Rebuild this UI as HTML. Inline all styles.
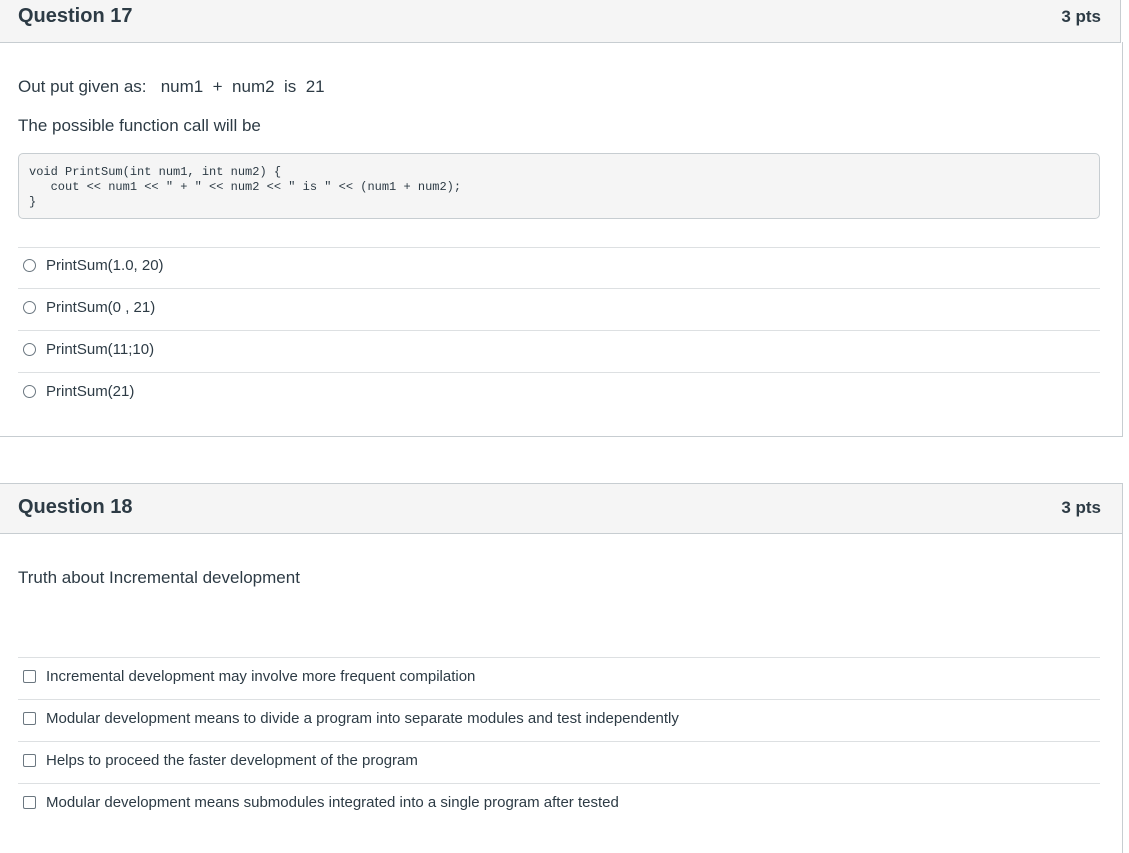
<!DOCTYPE html>
<html><head><style>
body{margin:0;width:1129px;height:846px;background:#fff;font-family:"Liberation Sans",sans-serif;color:#2d3b45;position:relative;overflow:hidden}
.a{position:absolute}
.hdr{position:absolute;left:-1px;width:1122px;background:#f5f5f5;border:1px solid #c7cdd1;box-sizing:border-box}
.h{position:absolute;left:18px;font-size:20px;font-weight:bold;color:#2d3b45}
.pts{position:absolute;right:28px;font-size:17px;font-weight:bold;color:#2d3b45}
.sep{position:absolute;left:18px;width:1082px;height:1px;background:#dde0e2}
.opt{position:absolute;left:46px;font-size:15px;color:#2d3b45;line-height:16px;margin-top:1px}
.rad{position:absolute;left:23px;width:11px;height:11px;border:1px solid #6b7780;border-radius:50%}
.chk{position:absolute;left:23px;width:11px;height:11px;border:1px solid #6b7780;border-radius:2px}
.b{font-size:17px}
</style></head><body>
<div class="hdr" style="top:-1px;height:44px;border-top:none"></div>
<div class="h" style="top:5px">Question 17</div>
<div class="pts" style="top:7px">3 pts</div>
<div class="a" style="left:1122px;top:42px;width:1px;height:395px;background:#c7cdd1"></div>
<div class="a" style="left:0;top:436px;width:1123px;height:1px;background:#c7cdd1"></div>
<div class="a b" style="left:18px;top:77px">Out put given as:&nbsp;&nbsp; num1&nbsp; +&nbsp; num2&nbsp; is&nbsp; 21</div>
<div class="a b" style="left:18px;top:116px">The possible function call will be</div>
<div class="a" style="left:18px;top:153px;width:1082px;height:66px;box-sizing:border-box;background:#f5f5f5;border:1px solid #c7cdd1;border-radius:5px"></div>
<pre class="a" style="margin:0;left:29px;top:165px;font-family:'Liberation Mono',monospace;font-size:12px;line-height:15px;color:#2d3b45">void PrintSum(int num1, int num2) {
   cout &lt;&lt; num1 &lt;&lt; " + " &lt;&lt; num2 &lt;&lt; " is " &lt;&lt; (num1 + num2);
}</pre>
<div class="sep" style="top:247px"></div>
<div class="rad" style="top:259px"></div><div class="opt" style="top:257px">PrintSum(1.0, 20)</div>
<div class="sep" style="top:288px"></div>
<div class="rad" style="top:301px"></div><div class="opt" style="top:299px">PrintSum(0 , 21)</div>
<div class="sep" style="top:330px"></div>
<div class="rad" style="top:343px"></div><div class="opt" style="top:341px">PrintSum(11;10)</div>
<div class="sep" style="top:372px"></div>
<div class="rad" style="top:385px"></div><div class="opt" style="top:383px">PrintSum(21)</div>

<div class="hdr" style="top:483px;height:51px;width:1124px"></div>
<div class="h" style="top:496px">Question 18</div>
<div class="pts" style="top:498px">3 pts</div>
<div class="a" style="left:1122px;top:533px;width:1px;height:320px;background:#c7cdd1"></div>
<div class="a b" style="left:18px;top:568px">Truth about Incremental development</div>
<div class="sep" style="top:657px"></div>
<div class="chk" style="top:670px"></div><div class="opt" style="top:668px">Incremental development may involve more frequent compilation</div>
<div class="sep" style="top:699px"></div>
<div class="chk" style="top:712px"></div><div class="opt" style="top:710px">Modular development means to divide a program into separate modules and test independently</div>
<div class="sep" style="top:741px"></div>
<div class="chk" style="top:754px"></div><div class="opt" style="top:752px">Helps to proceed the faster development of the program</div>
<div class="sep" style="top:783px"></div>
<div class="chk" style="top:796px"></div><div class="opt" style="top:794px">Modular development means submodules integrated into a single program after tested</div>
</body></html>
